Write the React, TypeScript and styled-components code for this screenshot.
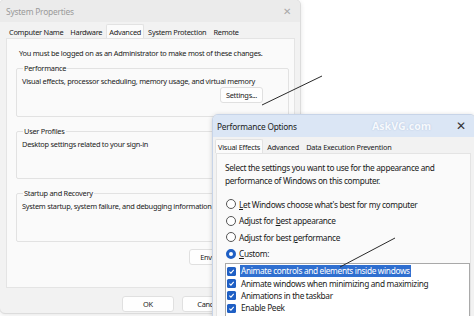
import React from "react";
import styled, { createGlobalStyle } from "styled-components";

const Global = createGlobalStyle`
  html, body { margin: 0; padding: 0; background: #ffffff; }
  body { font-family: "Noto Sans", "Liberation Sans", sans-serif; color: #1b1b1b; }
`;

const Desktop = styled.div`
  position: relative;
  width: 474px;
  height: 316px;
  overflow: hidden;
  background: #ffffff;
`;

const Window = styled.div<{ $front?: boolean }>`
  position: absolute;
  display: flex;
  flex-direction: column;
  background: #f2f2f2;
  box-sizing: border-box;
  border: 1px solid ${(p) => (p.$front ? "#c7d4e8" : "#dcdcdc")};
  border-radius: 6px;
  box-shadow: 0 1px 5px rgba(0, 0, 0, ${(p) => (p.$front ? 0.18 : 0.1)});
  overflow: hidden;
`;

const BackWindow = styled(Window)`
  left: -1px;
  top: -1px;
  width: 302px;
  height: 315px;
  font-size: 7.4px;
  letter-spacing: -0.27px;
`;

const FrontWindow = styled(Window)`
  left: 212px;
  top: 114px;
  width: 264px;
  height: 220px;
  font-size: 8.3px;
  letter-spacing: -0.33px;
`;

const TitleBar = styled.div<{ $active?: boolean }>`
  flex: 0 0 22px;
  display: flex;
  align-items: center;
  padding: 0 9px 0 ${(p) => (p.$active ? "4px" : "6px")};
  background: ${(p) => (p.$active ? "#dbe6f5" : "#ebebeb")};
  color: ${(p) => (p.$active ? "#1a1a1a" : "#9a9a9a")};
  font-size: ${(p) => (p.$active ? "8.3px" : "8.4px")};
  letter-spacing: -0.2px;
`;

const Title = styled.span`
  flex: 1;
`;

const Watermark = styled.span`
  margin-right: 25px;
  font-family: "Open Sans", "Noto Sans", sans-serif;
  font-size: 10.6px;
  font-weight: 700;
  letter-spacing: 0;
  color: #f6f9fd;
  text-shadow: 0 0 1px #b9c9e0, 0 0 2px #c5d3e8;
`;

const Close = styled.span<{ $active?: boolean }>`
  font-size: ${(p) => (p.$active ? "12px" : "10px")};
  color: ${(p) => (p.$active ? "#333" : "#a8a8a8")};
  line-height: 1;
`;

const TabRow = styled.div<{ $small?: boolean }>`
  flex: 0 0 16px;
  display: flex;
  align-items: stretch;
  gap: 1px;
  padding: 0 0 0 ${(p) => (p.$small ? "2px" : "6px")};
  font-size: ${(p) => (p.$small ? "7.3px" : "inherit")};
  letter-spacing: ${(p) => (p.$small ? "-0.2px" : "inherit")};
`;

const Tab = styled.div<{ $selected?: boolean }>`
  display: flex;
  align-items: center;
  padding: 0 2px;
  margin-top: 2px;
  background: ${(p) => (p.$selected ? "#fbfbfb" : "transparent")};
  border: 1px solid ${(p) => (p.$selected ? "#e2e2e2" : "transparent")};
  border-bottom: none;
  border-radius: 2px 2px 0 0;
  white-space: nowrap;
`;

const Panel = styled.div`
  display: flex;
  flex-direction: column;
  background: #fafafa;
  border: 1px solid #e4e4e4;
`;

const BackPanel = styled(Panel)`
  flex: 0 0 250px;
  box-sizing: border-box;
  margin: 0 5px 0 6px;
  padding: 8px 5px 0 9px;
`;

const Note = styled.div`
  margin-left: 3px;
  height: 12px;
  line-height: 12px;
`;

const Group = styled.fieldset<{ $h: number }>`
  box-sizing: border-box;
  height: ${(p) => p.$h}px;
  margin: 4px 0 0;
  padding: 2px 5px 0;
  border: 1px solid #e2e2e2;
  border-radius: 2px;
  display: flex;
  flex-direction: column;
  & + & { margin-top: 9px; }
`;

const Legend = styled.legend`
  padding: 0 1px;
  margin-left: 1px;
  line-height: 10px;
`;

const GroupText = styled.div`
  line-height: 12px;
`;

const Button = styled.div<{ $w: number }>`
  box-sizing: border-box;
  width: ${(p) => p.$w}px;
  height: 16px;
  display: flex;
  align-items: center;
  justify-content: center;
  background: #fefefe;
  border: 1px solid #e0e0e0;
  border-radius: 3px;
  white-space: nowrap;
  overflow: hidden;
`;

const ButtonRow = styled.div<{ $pad: string }>`
  display: flex;
  justify-content: flex-end;
  gap: 8px;
  padding: ${(p) => p.$pad};
`;

const Spacer = styled.div`
  flex: 1;
`;

const FrontPanel = styled(Panel)`
  flex: 1;
  margin: 0 4px 0 3px;
  padding: 7px 0 0 8px;
`;

const Desc = styled.div`
  line-height: 13px;
  margin-bottom: 9px;
`;

const Radio = styled.div`
  display: flex;
  align-items: center;
  gap: 3px;
  height: 16.5px;
  line-height: 11px;
  white-space: nowrap;
`;

const RadioDot = styled.span<{ $on?: boolean }>`
  box-sizing: border-box;
  width: 10px;
  height: 10px;
  border-radius: 50%;
  border: ${(p) => (p.$on ? "3px solid #1f5fc4" : "1px solid #555")};
  background: #ffffff;
  margin-left: 1px;
`;

const Key = styled.span`
  text-decoration: underline;
  text-underline-offset: 1px;
`;

const List = styled.div`
  margin: 1px 0 0 0;
  padding: 1px 0 0 1px;
  background: #ffffff;
  border: 1px solid #a9a9a9;
  display: flex;
  flex-direction: column;
`;

const Item = styled.div<{ $sel?: boolean }>`
  display: flex;
  align-items: center;
  gap: 4px;
  height: 12.3px;
  white-space: nowrap;
  & > span:last-child {
    background: ${(p) => (p.$sel ? "#2f6fd0" : "transparent")};
    color: ${(p) => (p.$sel ? "#ffffff" : "inherit")};
    padding: 0 1px;
    line-height: 11.5px;
  }
`;

const Check = styled.span<{ $on?: boolean }>`
  width: 9px;
  height: 9px;
  border-radius: 1.5px;
  background: ${(p) => (p.$on ? "#1f5fc4" : "#c8c8c8")};
  display: inline-flex;
  align-items: center;
  justify-content: center;
`;

const Overlay = styled.svg`
  position: absolute;
  left: 0;
  top: 0;
  pointer-events: none;
`;

const CheckMark = () => (
  <svg width="7" height="7" viewBox="0 0 10 10">
    <path d="M2 5.2 L4.2 7.3 L8.2 2.8" fill="none" stroke="#fff" strokeWidth="1.6" />
  </svg>
);

const items = [
  { text: "Animate controls and elements inside windows", on: true, sel: true },
  { text: "Animate windows when minimizing and maximizing", on: true },
  { text: "Animations in the taskbar", on: true },
  { text: "Enable Peek", on: true },
  { text: "Fade or slide menus into view", on: false },
];

export default function App() {
  return (
    <>
      <Global />
      <Desktop>
        <BackWindow>
          <TitleBar>
            <Title>System Properties</Title>
            <Close>✕</Close>
          </TitleBar>
          <TabRow>
            <Tab>Computer Name</Tab>
            <Tab>Hardware</Tab>
            <Tab $selected>Advanced</Tab>
            <Tab>System Protection</Tab>
            <Tab>Remote</Tab>
          </TabRow>
          <BackPanel>
            <Note>You must be logged on as an Administrator to make most of these changes.</Note>
            <Group $h={54}>
              <Legend>Performance</Legend>
              <GroupText>Visual effects, processor scheduling, memory usage, and virtual memory</GroupText>
              <Spacer />
              <ButtonRow $pad="0 20px 6px 0">
                <Button $w={43}>Settings...</Button>
              </ButtonRow>
            </Group>
            <Group $h={53}>
              <Legend>User Profiles</Legend>
              <GroupText>Desktop settings related to your sign-in</GroupText>
            </Group>
            <Group $h={54}>
              <Legend>Startup and Recovery</Legend>
              <GroupText>System startup, system failure, and debugging information</GroupText>
            </Group>
            <ButtonRow $pad="7px 0 0 0">
              <Button $w={100}>Environment Variables...</Button>
            </ButtonRow>
          </BackPanel>
          <ButtonRow $pad="8px 6px 0 0">
            <Button $w={52}>OK</Button>
            <Button $w={52}>Cancel</Button>
            <Button $w={52}>Apply</Button>
          </ButtonRow>
        </BackWindow>

        <FrontWindow $front>
          <TitleBar $active>
            <Title>Performance Options</Title>
            <Watermark>AskVG.com</Watermark>
            <Close $active>✕</Close>
          </TitleBar>
          <TabRow $small>
            <Tab $selected>Visual Effects</Tab>
            <Tab>Advanced</Tab>
            <Tab>Data Execution Prevention</Tab>
          </TabRow>
          <FrontPanel>
            <Desc>
              Select the settings you want to use for the appearance and
              <br />
              performance of Windows on this computer.
            </Desc>
            <Radio>
              <RadioDot />
              <span>
                <Key>L</Key>et Windows choose what's best for my computer
              </span>
            </Radio>
            <Radio>
              <RadioDot />
              <span>
                Adjust for <Key>b</Key>est appearance
              </span>
            </Radio>
            <Radio>
              <RadioDot />
              <span>
                Adjust for best <Key>p</Key>erformance
              </span>
            </Radio>
            <Radio>
              <RadioDot $on />
              <span>
                <Key>C</Key>ustom:
              </span>
            </Radio>
            <List>
              {items.map((it) => (
                <Item key={it.text} $sel={it.sel}>
                  <Check $on={it.on}>{it.on && <CheckMark />}</Check>
                  <span>{it.text}</span>
                </Item>
              ))}
            </List>
          </FrontPanel>
        </FrontWindow>

        <Overlay width="474" height="316" viewBox="0 0 474 316">
          <line x1="322" y1="76" x2="262" y2="105" stroke="#2a2a2a" strokeWidth="1" />
          <line x1="395" y1="238" x2="340" y2="267" stroke="#2a2a2a" strokeWidth="1" />
        </Overlay>
      </Desktop>
    </>
  );
}
